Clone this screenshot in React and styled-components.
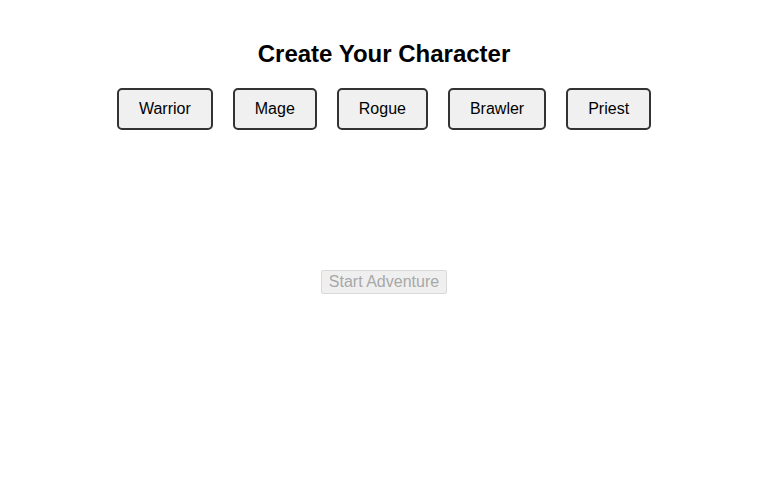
import React from "react";
import styled, { createGlobalStyle } from "styled-components";

const Global = createGlobalStyle`
  html, body { margin: 0; padding: 0; background: #ffffff; }
  body { font-family: "Liberation Sans", Arial, sans-serif; color: #000; }
`;

const Page = styled.div`
  display: flex;
  flex-direction: column;
  align-items: center;
  padding-top: 40px;
`;

const Title = styled.h1`
  margin: 0 0 20px;
  font-size: 24px;
  line-height: 28px;
  font-weight: bold;
`;

const ClassRow = styled.div`
  display: flex;
  gap: 20px;
`;

const ClassButton = styled.button`
  font-family: "Liberation Sans", Arial, sans-serif;
  font-size: 16px;
  line-height: 18px;
  padding: 10px 20px;
  border: 2px solid #333333;
  border-radius: 5px;
  background: #f0f0f0;
  color: #000;
  cursor: pointer;
`;

const StartButton = styled.button`
  margin-top: 140px;
  font-family: "Liberation Sans", Arial, sans-serif;
  font-size: 16px;
  line-height: 18px;
  padding: 2px 7px;
  border: 1px solid #d9d9d9;
  border-radius: 2px;
  background: #efefef;
  color: #a8a8a8;
`;

const classes = ["Warrior", "Mage", "Rogue", "Brawler", "Priest"];

export default function App() {
  return (
    <>
      <Global />
      <Page>
        <Title>Create Your Character</Title>
        <ClassRow>
          {classes.map((c) => (
            <ClassButton key={c}>{c}</ClassButton>
          ))}
        </ClassRow>
        <StartButton disabled>Start Adventure</StartButton>
      </Page>
    </>
  );
}
